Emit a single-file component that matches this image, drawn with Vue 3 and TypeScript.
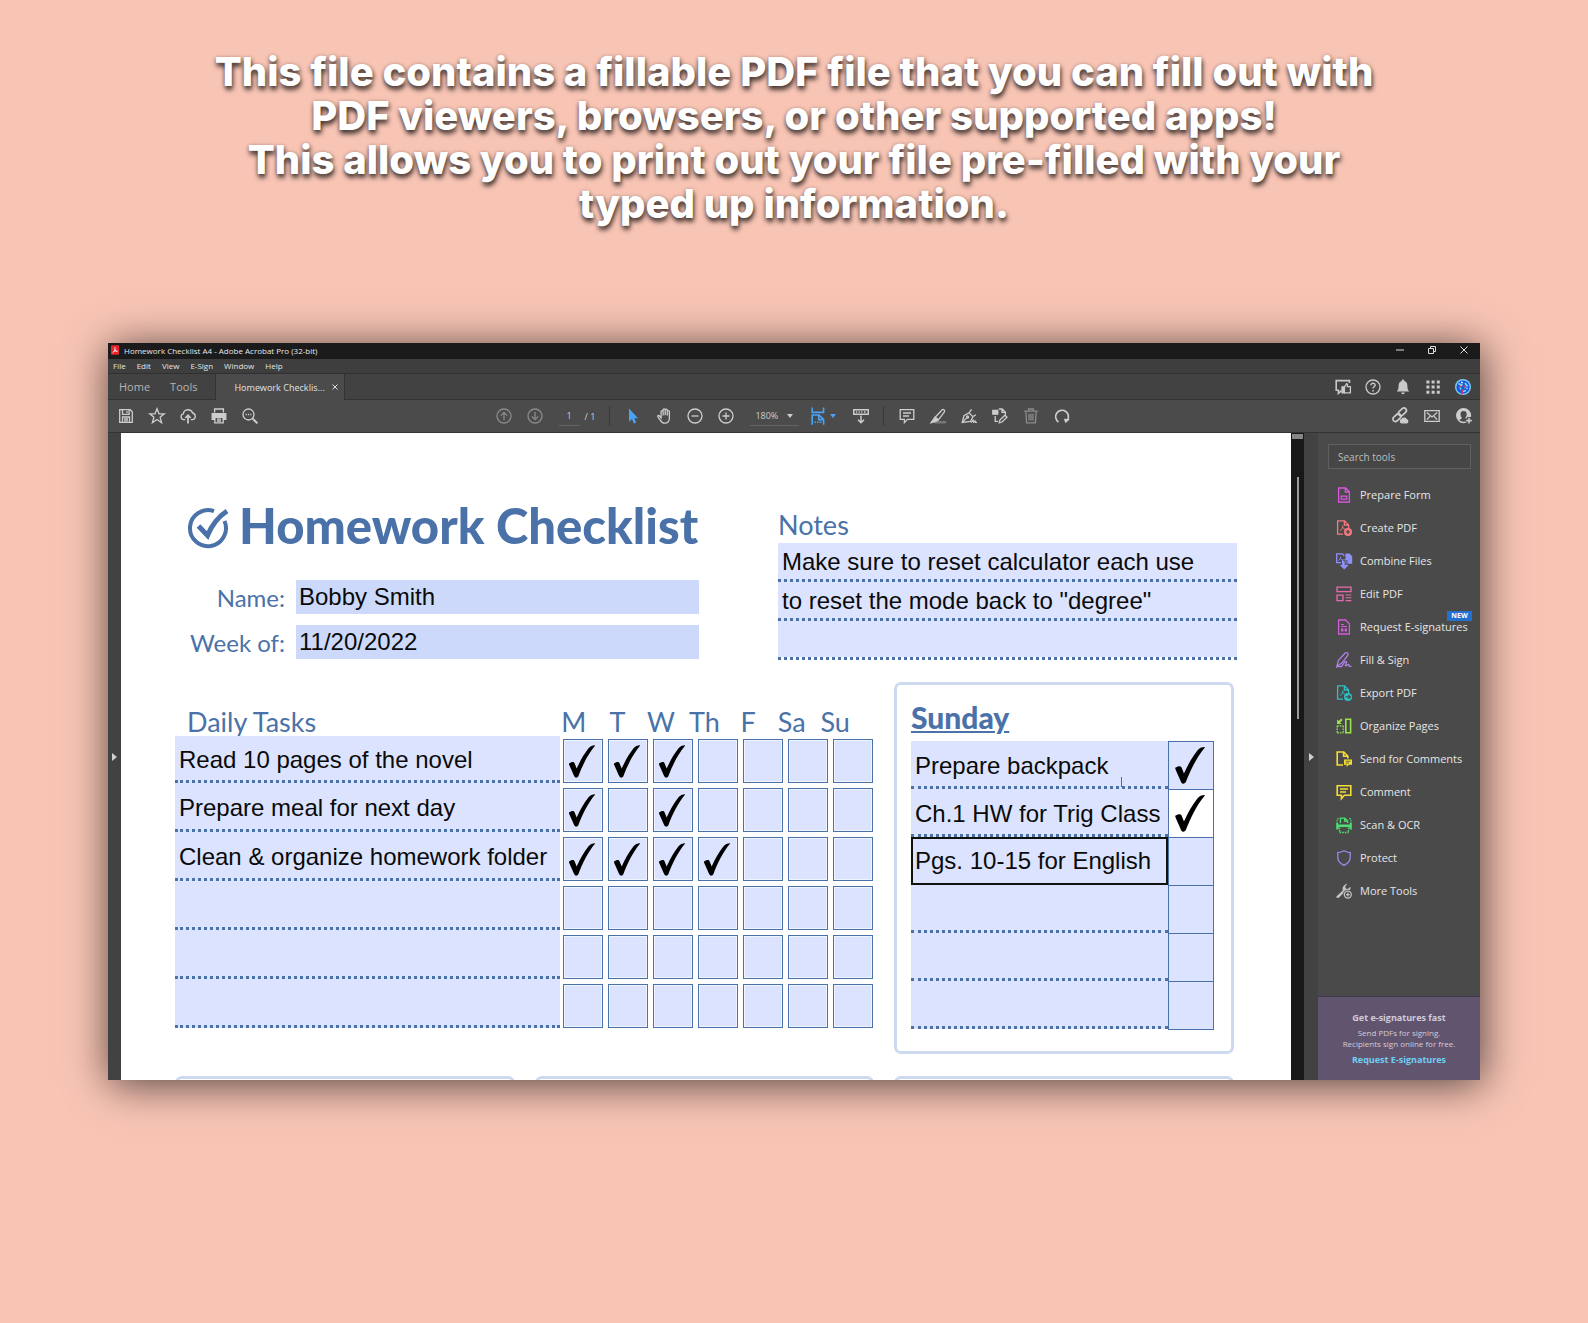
<script setup lang="ts">
import { reactive, ref } from 'vue'

interface Tool {
  label: string
  icon: string
  color: string
  isNew?: boolean
}

const menus = ['File', 'Edit', 'View', 'E-Sign', 'Window', 'Help']
const days = ['M', 'T', 'W', 'Th', 'F', 'Sa', 'Su']

const icons: Record<string, string> = {
  save: '<path d="M1.7 1.7h10.6l2 2v10.6H1.7z"/><path d="M4.5 1.7v4.6h6.6V1.7M4.5 14.3V9h7v5.3M6 11h4M6 12.8h4M9 3v2"/>',
  star: '<path d="M8 .8l2 5h5.2l-4.1 3.4 1.5 5.5L8 11.5l-4.6 3.2 1.5-5.5L.8 5.8H6z"/>',
  cloud: '<path d="M5.2 11.6H3.6a2.9 2.9 0 0 1-.3-5.7A4.8 4.8 0 0 1 12.6 5a3.4 3.4 0 0 1 .2 6.6h-2"/><path d="M8 15.4V7.6M5.3 10L8 7.3l2.7 2.7" stroke-width="1.7"/>',
  print: '<path d="M3.6 4.5V1h8.8v3.5"/><path fill="currentColor" d="M1.2 5.6h13.6v5.8h-2.4V9.3H3.6v2.1H1.2z"/><path d="M3.8 9.4h8.4v5.4H3.8zM6 11.2h4M6 13h4"/>',
  find: '<circle cx="6.5" cy="6.5" r="5.5"/><path d="M10.6 10.6l4.8 4.8" stroke-width="2"/><path d="M3.6 6.5h1.2M5.9 6.5h1.2M8.2 6.5h1.2" stroke-width="1.4"/>',
  up: '<circle cx="8" cy="8" r="7"/><path d="M8 12V4.5M4.8 7.6L8 4.4l3.2 3.2"/>',
  down: '<circle cx="8" cy="8" r="7"/><path d="M8 4v7.5M4.8 8.4L8 11.6l3.2-3.2"/>',
  pointer: '<path fill="currentColor" stroke="none" d="M4 .6v13.2l3-2.7 1.8 4.3 2.4-1-1.9-4.2h3.8z"/>',
  hand: '<path d="M5.1 9.800V3.600a1 1 0 0 1 2 0V7.500 1.900a1 1 0 0 1 2.100 0V7.300 2.100a1 1 0 0 1 2.100 0v5.400-3.900a1 1 0 0 1 2.100 0v6.200c0 3.400-1.600 5.400-4.600 5.400-2.600 0-3.600-1.200-4.800-3.300L1.800 8.800c-.5-1.200 1-1.700 1.700-.8z"/>',
  minus: '<circle cx="8" cy="8" r="7"/><path d="M4.5 8h7"/>',
  plus: '<circle cx="8" cy="8" r="7"/><path d="M4.5 8h7M8 4.5v7"/>',
  fit: '<path stroke-width="1.6" d="M2.2-.4v4.800h11.400V-.4M2.200 16.800V7h6.800l4.600 4.400v5.400M8.800 7v4.600h4.800"/><path d="M4.500 14.200h1.400M7 14.200h1.400M9.500 14.200h1.800" stroke-width="1.6"/>',
  keys: '<path stroke-width="1.5" d="M.8 1.800h14.400v4.400H.8z"/><path d="M3 4h1.200M5.600 4h1.200M8.200 4h1.200M11 4h1.600"/><path d="M8 7.500v7M5 11.800l3 3 3-3" stroke-width="1.5"/>',
  comment: '<path d="M1.200 1.700h13.600v9.600H8.400L5.400 14.600v-3.300H1.200z"/><path d="M4 5h8M4 8h6"/>',
  marker: '<path fill="#777" stroke="none" d="M6 13h10v2.400H4z"/><path d="M5.200 9.200l7-7.400c1.200-1 3.200.6 2.200 2l-6 8z"/><path fill="currentColor" d="M4.800 9.400l3.300 2.600-2.200 1.300-4.700 1.400z"/>',
  sign: '<path d="M1.200 14.400L3 7.600 8 4.800l4 4-2.600 4.700z"/><path d="M1.400 14.200l4.800-4.800M8.400 4.400l2.200-3M12.400 8.400l2.400-1.600"/><circle cx="6.600" cy="9" r="1"/><path d="M10 14.600l2-2.400.6 2 1.400-1.200.4 1.400H16"/>',
  edit: '<path fill="currentColor" d="M.8 2.400h5v3.800h-5z"/><path d="M6.800 1h3.400l3.200 3.200v2.600M10 1v3.400h3.400M3.200 8v5.400H6"/><path d="M7.200 14.800l.8-3 5-4.600 2 2-5 4.800z"/>',
  trash: '<path d="M1.200 3.200h13.600M5.600 3V1h4.800v2M2.800 3.200l.8 11.600h8.800l.8-11.600M6 5.800v6.600M8 5.800v6.600M10 5.800v6.600"/>',
  rotate: '<path stroke-width="1.7" d="M4.500 14a6.400 6.400 0 1 1 8.700-1.500"/><path fill="currentColor" stroke="none" d="M9.800 10.700l6 .5-4.300 4z"/>',
  link: '<g stroke-width="1.7"><rect x="5.900" y="1.400" width="9" height="5" rx="2.500" transform="rotate(-42 10.400 3.900)"/><rect x=".4" y="7.200" width="9" height="5" rx="2.500" transform="rotate(-42 4.900 9.700)"/></g><path fill="currentColor" d="M9.600 14.800h5.200a1.700 1.700 0 0 0-.4-3.200 2.500 2.500 0 0 0-4.400-.3 1.800 1.800 0 0 0-.4 3.500z"/>',
  mail: '<path d="M.8 2.600h14.400v10.800H.8z"/><path d="M2.800 4.600L8 9l5.200-4.400M2.800 11.600L6 8.200M13.200 11.600L10 8.200"/>',
  user: '<circle cx="7.600" cy="7.600" r="6.900" /><path fill="currentColor" stroke="none" d="M7.600.7a6.900 6.900 0 0 0-5 11.700c1-1.400 3.400-1.200 3.400-2.700C4.800 8.700 4.500 7.600 4.500 6a3.100 3.100 0 1 1 6.200 0c0 1.600-.3 2.700-1.500 3.700 0 .8 1 1 2 1.400l3-1.600A6.900 6.900 0 0 0 7.600.7z"/><path stroke="#4a4a4a" stroke-width="4" d="M13 9v7M9.500 12.600h7"/><path stroke-width="1.600" d="M13 9.800v5.600M10.200 12.600h5.600"/>',
  feedback: '<path stroke-width="1.600" d="M14.500 4V1.600H1.200v9.600h2.200v3.200l3-2.800"/><path fill="#424242" d="M9.400 8l2.200-3.400c1.200.2 1 1.400.6 3h3.200v6.200H9.400z"/><path fill="currentColor" d="M7 8h2.400v5.800H7z"/>',
  help: '<circle cx="8" cy="8" r="7"/><path stroke-width="1.500" d="M5.900 6.300c0-2.800 4.300-2.600 4.200-.1 0 1.600-2.100 1.500-2.100 3.300M8 10.900v1.500"/>',
  bell: '<path fill="currentColor" stroke="none" d="M8 .6c.9 0 1.300.6 1.300 1.400C11.600 2.600 12.400 4.500 12.400 7c0 3 .6 4 1.800 5.600H1.800C3 11 3.600 10 3.600 7c0-2.500.8-4.400 3.100-5C6.700 1.200 7.100.6 8 .6zM6.200 13.400h3.600a1.800 1.800 0 0 1-3.600 0z"/>',
  apps: '<path fill="currentColor" stroke="none" d="M1.400 1.400h3v3h-3zM6.600 1.400h3v3h-3zM11.800 1.400h3v3h-3zM1.400 6.600h3v3h-3zM6.600 6.600h3v3h-3zM11.800 6.600h3v3h-3zM1.400 11.800h3v3h-3zM6.600 11.800h3v3h-3zM11.800 11.800h3v3h-3z"/>',
  avatar: '<circle cx="8" cy="8" r="8" fill="#7ccbf2" stroke="none"/><circle cx="8" cy="8" r="6.600" fill="#1559e0" stroke="none"/><path stroke="#6fe0ff" stroke-width="1.600" d="M3.500 4.500l4 2M10 4l2.500 3.500M8 12.500l3-1M5 8.500l1 2"/><path stroke="#e8f8ff" stroke-width="1.400" d="M6 3.200l2 .6M11.500 9.800l1-.8"/><path stroke="#d8365f" stroke-width="1.500" d="M4 7.200l2.600.4M9 6.600l1.400 1.200M7.200 10.500l-.2 5"/><path stroke="#ffe060" stroke-width="1" d="M5.400 5.800l.8 1M9.500 9l1-.6"/>',
  form: '<path d="M2.600 1h7l3.800 3.800V15H2.600zM9.300 1v4h4"/><path d="M5.200 9.200h5.600v3H5.200z"/>',
  create: '<path d="M7 14.200H1.600V.9h7l4 4v3.400M8.400 1v4h4"/><path d="M4 10.600c2-1 3-3.400 2.800-5.200M6.500 7c.8 1.600 1.600 2 2.600 2.100" stroke-width="1"/><circle cx="12" cy="11.900" r="4" fill="currentColor" stroke="none"/><path stroke="#4a4a4a" d="M9.900 11.900h4.200M12 9.800V14"/>',
  combine: '<path d="M5 9.600H.7V.9h5.800l1.800 2"/><path d="M2.400 7.600c1.600-.8 2.300-2.600 2.100-4M4.400 5.400c.6 1 1 1.300 1.700 1.400" stroke-width="1"/><path fill="currentColor" stroke="none" d="M9.400.4h4l2.800 2.800v7.600h-4.800V7h-2zM6 6.600h4.400v5.400h2.400L8.200 16.600 3.800 12H6z"/><path stroke="#4a4a4a" stroke-width="1" d="M7.200 7.600h2v4.600"/>',
  layout: '<path d="M1 1.200h14v4.400H1zM1 9.200h6v5.400H1z"/><path d="M9.600 9h5.800M9.600 11.800h5.800M9.600 14.600h5.800" stroke-width="1.100"/>',
  request: '<path d="M2.600 1h7l3.800 3.800V15H2.600z"/><path fill="currentColor" stroke="none" d="M5 5h3v1H5zM5 7h6v1H5zM5 9.400h2.400v3.200H5zM8.600 9.400H11v3.200H8.600z"/>',
  fill: '<path d="M.8 14.600l1.600-6.200L9.200 1c1.600-1.200 3.600.6 2.600 2.400L6 10.800z"/><path d="M.8 14.600h4.800l3-4.600c1.400-1.600 2.400-.2 1.600 1.200-1 1.800-1.400 3 .2 2.400 1-.4 1.400-1.400 2.200-1.200.8.4-.2 1.800 1 2H15.600"/>',
  export: '<path d="M7 14.200H1.600V.9h7l4 4v3.400M8.400 1v4h4"/><path d="M4 10.600c2-1 3-3.400 2.800-5.200M6.500 7c.8 1.600 1.600 2 2.600 2.100" stroke-width="1"/><circle cx="12" cy="11.900" r="4" fill="currentColor" stroke="none"/><path stroke="#4a4a4a" d="M9.600 11.900H14M12.400 10l1.900 1.900-1.900 1.900"/>',
  organize: '<path stroke-width="1.600" d="M9.800 1.200h4.800v13.600H9.800z"/><path fill="currentColor" stroke="none" d="M1 1.600l1.600 1.500L5.200.6l1.400 1.400L4.100 4.500 5.800 6H1z"/><path stroke-dasharray="1.600 1" d="M1.200 7.800h6M1.200 7.800v7M1.200 14.800h6M7.200 7.800v7"/>',
  send: '<path stroke-width="1.600" d="M7 14H1.200V1h6.600l4 4v2.600M7.600 1v4.200h4.200"/><path fill="currentColor" stroke="none" d="M8 8.400h8v5.400h-3.200L10.600 16v-2.200H8z"/><path stroke="#4a4a4a" stroke-width=".8" d="M9.600 10.200h4.800M9.600 12h3.400"/>',
  note: '<path stroke-width="1.600" d="M1.200 1.700h13.600v9.600H8.400L5.400 14.600v-3.300H1.200z"/><path d="M4 5h8M4 8h6"/>',
  scan: '<path d="M4.400 6V1.200h4.400l2.800 2.600V6M8.600 1.400v2.800h2.800"/><path fill="currentColor" stroke="none" d="M.2 5.600h2v1.800h11.600V5.600h2v7h-2.400V10H2.600v2.600H.2zM1.200 1h1.400v1.400H1.200zM13.400 1h1.400v1.400h-1.400zM.2 3.200h1.400v1H.2zM14.400 3.200h1.400v1h-1.400z"/><path stroke-dasharray="1.600 1" d="M3.600 10.500v5M3.600 15.500h9M12.400 10.500v5"/>',
  shield: '<path d="M8 .8c2 1.200 4 1.700 6.200 1.800v5c0 4-2.400 6-6.200 7.800-3.800-1.800-6.200-3.800-6.200-7.800v-5C4 2.500 6 2 8 .8z"/>',
  wrench: '<path fill="currentColor" stroke="none" d="M.6 13.200l6.200-5.600C6 4.600 7.600 1.400 11.400.8L9.200 3.600l.6 2 2 .5 2.500-2.400c.5 1.600 0 3.200-1 4.200l-4 .5-6.600 6.300c-1.400.8-3-.4-2.100-1.500z"/><circle cx="11.800" cy="11.600" r="4.900" fill="#4a4a4a" stroke="none"/><circle cx="11.800" cy="11.600" r="3.500"/><path d="M10 11.600h3.600M11.800 9.800v3.600"/>',
}

const fileTools = [
  { icon: 'save', label: 'Save' },
  { icon: 'star', label: 'Star' },
  { icon: 'cloud', label: 'Upload' },
  { icon: 'print', label: 'Print' },
  { icon: 'find', label: 'Find' },
]
const viewTools = [
  { icon: 'hand', label: 'Pan' },
  { icon: 'minus', label: 'Zoom out' },
  { icon: 'plus', label: 'Zoom in' },
]
const markupTools = [
  { icon: 'comment', label: 'Add comment' },
  { icon: 'marker', label: 'Highlight' },
  { icon: 'sign', label: 'Sign' },
  { icon: 'edit', label: 'Edit' },
  { icon: 'trash', label: 'Delete' },
  { icon: 'rotate', label: 'Rotate' },
]
const shareTools = [
  { icon: 'link', label: 'Share link' },
  { icon: 'mail', label: 'Email' },
  { icon: 'user', label: 'Invite' },
]
const accountTools = [
  { icon: 'feedback', label: 'Feedback' },
  { icon: 'help', label: 'Help' },
  { icon: 'bell', label: 'Notifications' },
  { icon: 'apps', label: 'Apps' },
  { icon: 'avatar', label: 'Account' },
]

const tools: Tool[] = [
  { label: 'Prepare Form', icon: 'form', color: '#d858e0' },
  { label: 'Create PDF', icon: 'create', color: '#f47c80' },
  { label: 'Combine Files', icon: 'combine', color: '#9090fa' },
  { label: 'Edit PDF', icon: 'layout', color: '#e66cae' },
  { label: 'Request E-signatures', icon: 'request', color: '#cf5cdc', isNew: true },
  { label: 'Fill & Sign', icon: 'fill', color: '#b080ea' },
  { label: 'Export PDF', icon: 'export', color: '#2fc0c4' },
  { label: 'Organize Pages', icon: 'organize', color: '#97e34c' },
  { label: 'Send for Comments', icon: 'send', color: '#f5dd36' },
  { label: 'Comment', icon: 'note', color: '#f5dd36' },
  { label: 'Scan & OCR', icon: 'scan', color: '#4fdc72' },
  { label: 'Protect', icon: 'shield', color: '#9a8cf0' },
  { label: 'More Tools', icon: 'wrench', color: '#c4c4c4' },
]

const form = reactive({
  name: 'Bobby Smith',
  week: '11/20/2022',
  notes: ['Make sure to reset calculator each use', 'to reset the mode back to "degree"', ''],
})

const row = (text: string, done = 0) => ({ text, checks: days.map((_, i) => ((done >> i) & 1) === 1) })
const dailyTasks = reactive([
  row('Read 10 pages of the novel', 0b0111),
  row('Prepare meal for next day', 0b0101),
  row('Clean & organize homework folder', 0b1111),
  row(''),
  row(''),
  row(''),
])

const sunday = reactive([
  { text: 'Prepare backpack', done: true },
  { text: 'Ch.1 HW for Trig Class', done: true },
  { text: 'Pgs. 10-15 for English', done: false },
  { text: '', done: false },
  { text: '', done: false },
  { text: '', done: false },
])
const activeTask = 2
const hoveredBox = 1

const page = ref('1')
const zoom = ref('180%')
const search = ref('')
const checkPath =
  'M78 0C70 0 64 2 58 10 44 28 34 46 23 70L17 55C14 49 10 50 1 54-1 55 0 57 1 60L15 92C18 99 24 99 28 93 40 62 56 28 78 2Z'
</script>

<template>
  <main class="poster">
    <p class="headline">
      This file contains a fillable PDF file that you can fill out with<br />
      PDF viewers, browsers, or other supported apps!<br />
      This allows you to print out your file pre-filled with your<br />
      typed up information.
    </p>

    <section class="window">
      <header class="titlebar">
        <svg class="app-logo" viewBox="0 0 10 12">
          <rect width="10" height="12" rx="1" fill="#e5252a" />
          <path d="M2 9.500C4.500 8 5.500 5 4.800 2.500M4.800 5c.7 2 1.700 2.700 3.200 2.900M3 8c1.500-.8 3-1 5-.5" fill="none" stroke="#fff" />
        </svg>
        <span class="title">Homework Checklist A4 - Adobe Acrobat Pro (32-bit)</span>
        <div class="win-controls">
          <button aria-label="Minimize"><svg viewBox="0 0 8 8"><path d="M0 4h8" /></svg></button>
          <button aria-label="Restore"><svg viewBox="0 0 8 8"><path d="M.5 2.500h5v5h-5zM2.500 2V.5h5v5H6" /></svg></button>
          <button aria-label="Close"><svg viewBox="0 0 8 8"><path d="M.5.5l7 7M7.500.5l-7 7" /></svg></button>
        </div>
      </header>

      <nav class="menubar">
        <button v-for="m in menus" :key="m">{{ m }}</button>
      </nav>

      <div class="tabbar">
        <div class="fixed-tabs">
          <button>Home</button>
          <button>Tools</button>
        </div>
        <div class="doc-tab">
          <span>Homework Checklis...</span>
          <button aria-label="Close tab"><svg viewBox="0 0 6 6"><path d="M.5.5l5 5M5.500.5l-5 5" /></svg></button>
        </div>
        <div class="account">
          <button v-for="t in accountTools" :key="t.icon" :aria-label="t.label">
            <svg class="icon" viewBox="0 0 16 16" v-html="icons[t.icon]"></svg>
          </button>
        </div>
      </div>

      <div class="toolbar">
        <div class="group">
          <button v-for="t in fileTools" :key="t.icon" class="tool" :aria-label="t.label">
            <svg class="icon" viewBox="0 0 16 16" v-html="icons[t.icon]"></svg>
          </button>
        </div>
        <div class="group center">
          <button class="tool dim" aria-label="Previous page"><svg class="icon" viewBox="0 0 16 16" v-html="icons.up"></svg></button>
          <button class="tool dim" aria-label="Next page"><svg class="icon" viewBox="0 0 16 16" v-html="icons.down"></svg></button>
          <input v-model="page" class="page-no" aria-label="Page number" />
          <span class="page-count">/ 1</span>
          <i class="sep"></i>
          <button class="tool blue" aria-label="Select"><svg class="icon" viewBox="0 0 16 16" v-html="icons.pointer"></svg></button>
          <button v-for="t in viewTools" :key="t.icon" class="tool" :aria-label="t.label">
            <svg class="icon" viewBox="0 0 16 16" v-html="icons[t.icon]"></svg>
          </button>
          <div class="zoom">
            <select v-model="zoom" aria-label="Zoom level">
              <option>180%</option>
              <option>100%</option>
            </select>
            <svg class="caret" viewBox="0 0 6 4"><path d="M0 0h6L3 4z" /></svg>
          </div>
          <button class="tool blue fit" aria-label="Fit page">
            <svg class="icon" viewBox="0 0 16 16" v-html="icons.fit"></svg>
            <svg class="caret" viewBox="0 0 6 4"><path d="M0 0h6L3 4z" /></svg>
          </button>
          <button class="tool" aria-label="Show keyboard"><svg class="icon" viewBox="0 0 16 16" v-html="icons.keys"></svg></button>
          <i class="sep"></i>
          <button v-for="t in markupTools" :key="t.icon" class="tool" :class="{ dim: t.icon === 'trash' }" :aria-label="t.label">
            <svg class="icon" viewBox="0 0 16 16" v-html="icons[t.icon]"></svg>
          </button>
        </div>
        <div class="group end">
          <button v-for="t in shareTools" :key="t.icon" class="tool" :aria-label="t.label">
            <svg class="icon" viewBox="0 0 16 16" v-html="icons[t.icon]"></svg>
          </button>
        </div>
      </div>

      <div class="workspace">
        <button class="rail left" aria-label="Open navigation pane"><svg viewBox="0 0 5 8"><path d="M0 0l5 4-5 4z" /></svg></button>

        <article class="sheet">
          <div class="top">
            <div class="intro">
              <h1>
                <svg class="badge" viewBox="0 0 42 41">
                  <path d="M27 3.200A18 18 0 1 0 37.500 13" />
                  <path class="tick" d="M11.500 18l9 9.500C24 19 31 9 40 3" />
                </svg>
                Homework Checklist
              </h1>
              <div class="field">
                <label for="student">Name:</label>
                <input id="student" v-model="form.name" />
              </div>
              <div class="field">
                <label for="week">Week of:</label>
                <input id="week" v-model="form.week" />
              </div>
            </div>
            <div class="notes">
              <h2>Notes</h2>
              <input v-for="(_, i) in form.notes" :key="i" v-model="form.notes[i]" :aria-label="`Note line ${i + 1}`" />
            </div>
          </div>

          <div class="middle">
            <div class="daily">
              <div class="daily-head">
                <h2>Daily Tasks</h2>
                <div class="days"><span v-for="d in days" :key="d">{{ d }}</span></div>
              </div>
              <div v-for="(task, i) in dailyTasks" :key="i" class="daily-row">
                <input v-model="task.text" class="line" :aria-label="`Daily task ${i + 1}`" />
                <label v-for="(d, j) in days" :key="d" class="box">
                  <input v-model="task.checks[j]" type="checkbox" :aria-label="`Task ${i + 1}, ${d}`" />
                  <svg v-if="task.checks[j]" viewBox="0 0 78 98"><path :d="checkPath" /></svg>
                </label>
              </div>
            </div>

            <div class="card">
              <h2>Sunday</h2>
              <div v-for="(task, i) in sunday" :key="i" class="card-row">
                <input v-model="task.text" class="line" :class="{ active: i === activeTask }" :aria-label="`Sunday task ${i + 1}`" />
                <i v-if="i === 0" class="ibeam"></i>
                <label class="box" :class="{ hovered: i === hoveredBox }">
                  <input v-model="task.done" type="checkbox" :aria-label="`Sunday task ${i + 1} done`" />
                  <svg v-if="task.done" viewBox="0 0 78 98"><path :d="checkPath" /></svg>
                </label>
              </div>
            </div>
          </div>

          <div class="next-cards"><div></div><div></div><div></div></div>
        </article>

        <div class="scroll"><i class="cap"></i><i class="thumb"></i></div>
        <button class="rail right" aria-label="Collapse tools pane"><svg viewBox="0 0 5 8"><path d="M0 0l5 4-5 4z" /></svg></button>

        <aside class="tools">
          <input v-model="search" class="search" placeholder="Search tools" aria-label="Search tools" />
          <ul>
            <li v-for="t in tools" :key="t.label">
              <button>
                <svg class="icon" viewBox="0 0 16 16" :style="{ color: t.color }" v-html="icons[t.icon]"></svg>
                <span>{{ t.label }}</span>
                <em v-if="t.isNew">NEW</em>
              </button>
            </li>
          </ul>
          <div class="promo">
            <strong>Get e-signatures fast</strong>
            <p>Send PDFs for signing.<br />Recipients sign online for free.</p>
            <a href="#">Request E-signatures</a>
          </div>
        </aside>
      </div>
    </section>
  </main>
</template>

<style>
body {
  background: #f8c5b5;
}
</style>

<style scoped>
* {
  box-sizing: border-box;
}
button,
input,
select {
  margin: 0;
  padding: 0;
  border: 0;
  border-radius: 0;
  background: none;
  color: inherit;
  font: inherit;
  outline: 0;
}
button {
  display: flex;
  align-items: center;
  justify-content: center;
}
h1,
h2,
p,
ul {
  margin: 0;
  padding: 0;
}
.poster {
  min-height: 100vh;
  padding: 50px 108px 240px;
  font-family: 'Open Sans', 'Noto Sans', sans-serif;
}
.headline {
  color: #fff;
  font: 800 40px/44px Inter, sans-serif;
  text-align: center;
  white-space: nowrap;
  text-shadow: 1px 4px 5px rgba(0, 0, 0, 0.65), 0 1px 4px rgba(0, 0, 0, 0.4);
}
.window {
  margin-top: 117px;
  background: #424242;
  color: #d6d6d6;
  box-shadow: 2px 4px 40px rgba(0, 0, 0, 0.68);
}
.icon {
  width: 16px;
  height: 16px;
  flex: none;
  overflow: visible;
  fill: none;
  stroke: currentColor;
  stroke-width: 1.3;
}

/* title bar and menus */
.titlebar {
  display: flex;
  align-items: center;
  height: 16px;
  padding: 0 0 2px 3px;
  background: #1b1b1b;
  color: #e8e8e8;
  font-size: 8px;
}
.app-logo {
  width: 8px;
  height: 10px;
  margin-right: 5px;
}
.title {
  flex: 1;
}
.win-controls {
  display: flex;
}
.win-controls button {
  width: 32px;
  height: 14px;
}
.win-controls svg {
  width: 8px;
  height: 8px;
  fill: none;
  stroke: #ddd;
}
.menubar {
  display: flex;
  gap: 11px;
  height: 15px;
  padding: 0 0 2px 5px;
  border-bottom: 1px solid #303030;
  background: #3e3e3e;
  color: #e4e4e4;
  font-size: 8px;
}
.tabbar {
  display: flex;
  height: 26px;
  border-bottom: 1px solid #333;
  background: #424242;
  font-size: 11px;
}
.fixed-tabs {
  display: flex;
  gap: 20px;
  padding: 0 18px 0 11px;
  border-right: 1px solid #333;
  color: #b4b4b4;
}
.doc-tab {
  display: flex;
  align-items: center;
  justify-content: space-between;
  width: 129px;
  height: 26px;
  padding: 0 6px 0 18px;
  border-right: 1px solid #333;
  background: #4b4b4b;
  color: #dcdcdc;
  font-family: 'Noto Sans', sans-serif;
  font-size: 9px;
}
.doc-tab svg {
  width: 6px;
  height: 6px;
  fill: none;
  stroke: #ddd;
}
.account {
  display: flex;
  margin-left: auto;
  padding-right: 2px;
  color: #c9c9c9;
}
.account button {
  width: 30px;
}

/* toolbar */
.toolbar {
  display: grid;
  grid-template-columns: 1fr auto 1fr;
  align-items: center;
  height: 33px;
  padding-left: 2px;
  border-bottom: 1px solid #333;
  background: #4b4b4b;
  color: #cdcdcd;
  font-size: 9px;
}
.group {
  display: flex;
  align-items: center;
}
.center {
  margin-right: 24px;
}
.end {
  justify-content: flex-end;
}
.tool {
  width: 31px;
  height: 32px;
}
.end .tool {
  width: 32px;
}
.dim {
  color: #8b8b8b;
}
.blue {
  color: #4aa3f7;
}
.page-no {
  width: 21px;
  height: 20px;
  margin-left: 8px;
  border-bottom: 1px solid #636363;
  text-align: center;
}
.page-count {
  margin-left: 5px;
}
.sep {
  width: 1px;
  height: 20px;
  margin: 0 7px 0 14px;
  background: #383838;
}
.zoom {
  display: flex;
  align-items: center;
  width: 49px;
  height: 20px;
  margin: 0 6px 0 9px;
  border-bottom: 1px solid #636363;
}
.zoom select {
  width: 37px;
  padding-left: 5px;
  appearance: none;
}
.caret {
  width: 6px;
  height: 4px;
  fill: currentColor;
}
.fit {
  gap: 4px;
  width: 36px;
  margin-right: 4px;
}
.tool + .sep {
  margin-left: 7px;
}

/* document area */
.workspace {
  display: flex;
}
.rail {
  width: 13px;
  background: #424242;
}
.rail.right {
  width: 14px;
}
.rail svg {
  width: 5px;
  height: 8px;
  fill: #cfcfcf;
}
.scroll {
  display: flex;
  flex-direction: column;
  align-items: center;
  width: 13px;
  background: #181818;
}
.cap {
  width: 11px;
  height: 5px;
  margin-top: 1px;
  background: #868686;
}
.thumb {
  width: 2px;
  height: 242px;
  margin-top: 38px;
  background: #9a9a9a;
}
.sheet {
  flex: 1;
  min-width: 0;
  padding: 68px 54px 0;
  background: #fff;
  color: #4a72a8;
  font-family: Lato, sans-serif;
}
.sheet input {
  color: #0a0a0a;
  font: 24px 'Liberation Sans', Arial, sans-serif;
}
.top {
  display: flex;
  gap: 79px;
}
.intro {
  flex: 1;
  min-width: 0;
}
h1 {
  display: flex;
  align-items: flex-end;
  gap: 10px;
  margin-bottom: 31px;
  padding-left: 12px;
  font-size: 49px;
  font-weight: 900;
  line-height: 48px;
  white-space: nowrap;
}
.badge {
  flex: none;
  width: 42px;
  height: 41px;
  fill: none;
  stroke: #4a72a8;
  stroke-width: 4;
}
.badge .tick {
  stroke-width: 5;
}
h2 {
  font-size: 27px;
  font-weight: 400;
  line-height: 32px;
}
.field {
  display: flex;
  align-items: center;
  gap: 11px;
  font-size: 24px;
}
.field + .field {
  margin-top: 11px;
}
.field label {
  width: 110px;
  text-align: right;
}
.field input {
  flex: 1;
  min-width: 0;
  height: 34px;
  padding-left: 3px;
  background: #cdd9fa;
}
.notes {
  flex: 0 0 459px;
  padding-top: 8px;
}
.notes h2 {
  margin-bottom: 2px;
}
.notes input {
  display: block;
  width: 100%;
  height: 39px;
  padding: 2px 0 0 4px;
  border-bottom: 3px dotted #4a72a8;
  background: #dce3ff;
}
.notes input:last-child {
  background-clip: padding-box;
}
.middle {
  display: flex;
  gap: 21px;
  margin-top: 22px;
  padding-right: 3px;
}
.daily {
  flex: 1;
  min-width: 0;
  padding-top: 26px;
}
.daily-head {
  display: flex;
  justify-content: space-between;
  height: 28px;
  padding: 0 16px 0 12px;
}
.daily-head h2,
.days {
  font-size: 27px;
  line-height: 28px;
}
.days {
  display: grid;
  grid-template-columns: repeat(7, 1fr);
  width: 305px;
  text-align: center;
}
.daily-row {
  display: flex;
  align-items: flex-end;
  gap: 5px;
  height: 49px;
}
.daily-head + .daily-row {
  height: 47px;
}
.line {
  flex: 1;
  min-width: 0;
  height: 100%;
  padding: 4px 0 0 4px;
  border-bottom: 3px dotted #4a72a8;
  background: #dce3ff;
}
.daily-row .line {
  margin-right: -2px;
}
.box {
  display: flex;
  align-items: center;
  justify-content: center;
  position: relative;
  width: 40px;
  height: 44px;
  border: 1px solid #4a72a8;
  background: #dce3ff;
}
.daily-row .box {
  box-shadow: inset 0 0 0 1px #f0f4ff;
}
.box input {
  position: absolute;
  inset: 0;
  appearance: none;
}
.box svg {
  width: 26px;
  height: 33px;
  margin-right: 2px;
  fill: #000;
}
.card {
  flex: 0 0 340px;
  min-width: 0;
  padding: 16px 17px 22px 14px;
  border: 3px solid #cdd9f1;
  border-radius: 7px;
}
.card h2 {
  margin-bottom: 8px;
  font-size: 30px;
  font-weight: 900;
  text-decoration: underline;
  text-decoration-thickness: 2px;
  text-underline-offset: 2px;
}
.card-row {
  display: flex;
  position: relative;
  height: 48px;
}
.card-row .box {
  width: 46px;
  height: 49px;
}
.card-row .box svg {
  width: 30px;
  height: 37px;
}
.card-row .box.hovered {
  background: #fff;
}
.line.active {
  padding: 0 0 0 2px;
  border: 2px solid #111;
}
.ibeam {
  position: absolute;
  right: 92px;
  bottom: 2px;
  width: 1px;
  height: 10px;
  background: #666;
}
.next-cards {
  display: flex;
  gap: 20px;
  height: 4px;
  margin-top: 22px;
  padding-right: 3px;
  overflow: hidden;
}
.next-cards div {
  flex: 1;
  height: 20px;
  border: 3px solid #cdd9f1;
  border-radius: 7px;
}

/* tools pane */
.tools {
  display: flex;
  flex-direction: column;
  width: 162px;
  background: #4a4a4a;
  color: #e6e6e6;
  font-size: 11px;
}
.search {
  height: 25px;
  margin: 11px 9px 9px 10px;
  padding-left: 9px;
  border: 1px solid #606060;
  background: #464646;
  font-size: 10px;
}
.search::placeholder {
  color: #bdbdbd;
}
.tools ul {
  list-style: none;
}
.tools li button {
  position: relative;
  justify-content: flex-start;
  gap: 8px;
  width: 100%;
  height: 33px;
  padding-left: 18px;
  white-space: nowrap;
}
.tools em {
  position: absolute;
  top: 1px;
  right: 8px;
  width: 25px;
  background: #2470d0;
  color: #fff;
  font: 700 7px/10px 'Open Sans', sans-serif;
  text-align: center;
}
.promo {
  margin-top: auto;
  height: 84px;
  padding-top: 14px;
  border-top: 1px solid #40394c;
  background: #61546f;
  color: #d2ccd8;
  font-size: 8px;
  line-height: 11px;
  text-align: center;
}
.promo strong,
.promo a {
  display: block;
  font-size: 9px;
  font-weight: 700;
  line-height: 14px;
}
.promo p {
  margin: 2px 0 4px;
}
.promo a {
  color: #6fcff5;
  text-decoration: none;
}
</style>
